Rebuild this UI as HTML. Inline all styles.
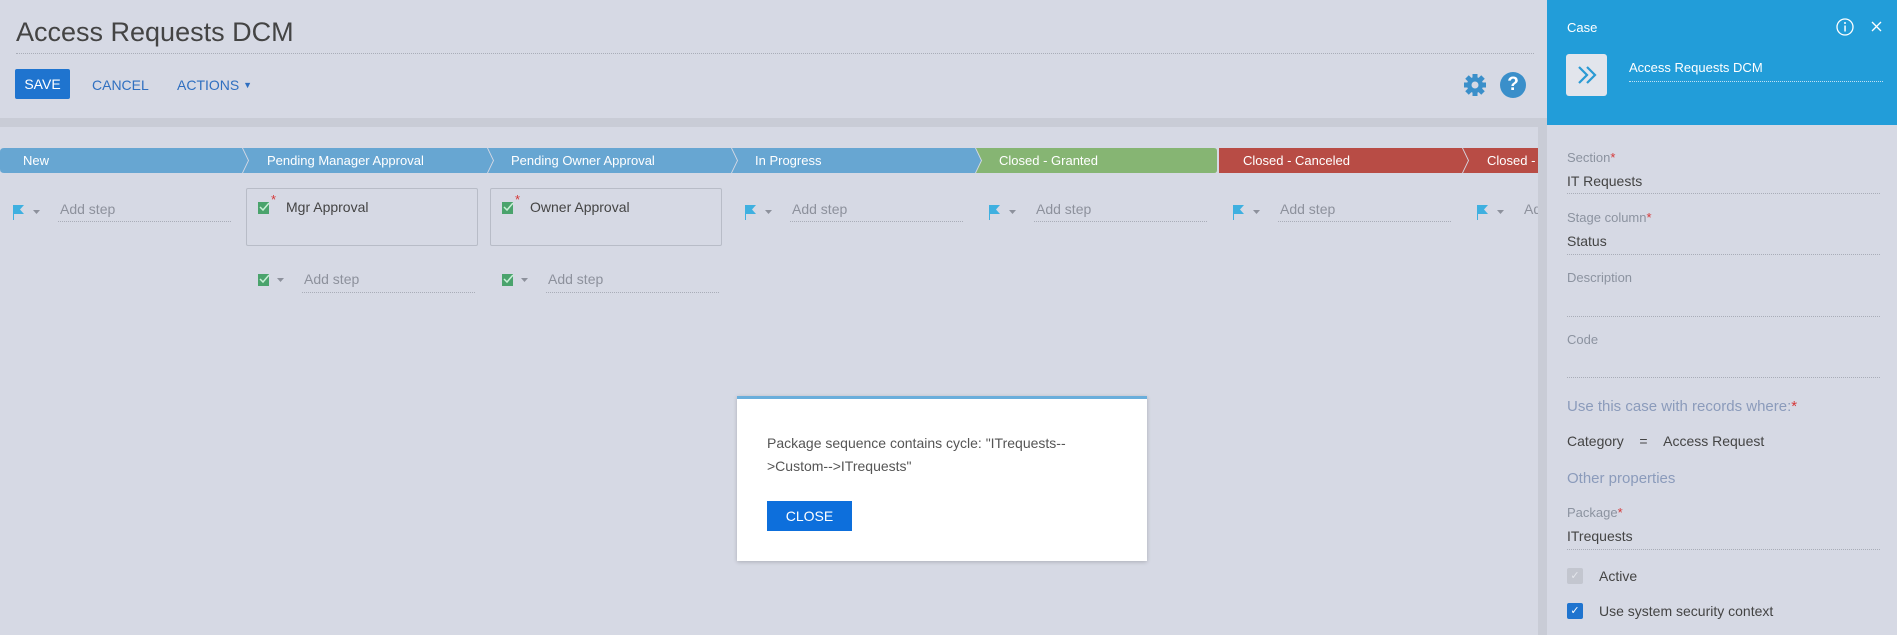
<!DOCTYPE html><html><head><style>
*{margin:0;padding:0;box-sizing:border-box}
body{width:1897px;height:635px;overflow:hidden;background:#d6d9e4;font-family:"Liberation Sans",sans-serif;position:relative;color:#444}
.a{position:absolute;white-space:nowrap}
.stage{position:absolute;top:148px;height:25px;color:#fff;font-size:13px;line-height:25px}
.dl{position:absolute;border-bottom:1px dotted #a9adb8;height:0}
.add{color:#8d919c;font-size:14px}
.lbl{font-size:13px;color:#8c93a0}
.val{font-size:14px;color:#444}
.star{color:#d53838}
</style></head><body>
<div class="a" style="left:16px;top:17px;font-size:27px;color:#444">Access Requests DCM</div>
<div class="dl" style="left:16px;top:53px;width:1518px"></div>
<div class="a" style="left:15px;top:69px;width:55px;height:30px;background:#1f74cf;border-radius:2px;color:#fff;font-size:14px;line-height:30px;text-align:center">SAVE</div>
<div class="a" style="left:92px;top:77px;font-size:14px;color:#2f6fc0">CANCEL</div>
<div class="a" style="left:177px;top:77px;font-size:14px;color:#2f6fc0">ACTIONS <span style="font-size:9px;vertical-align:2px">▼</span></div>
<svg class="a" style="left:1461px;top:71px" width="28" height="28" viewBox="0 0 28 28"><g fill="#3a8fca"><circle cx="14" cy="14" r="8"/><g stroke="#3a8fca" stroke-width="5"><line x1="14" y1="3" x2="14" y2="25"/><line x1="3" y1="14" x2="25" y2="14"/><line x1="6" y1="6" x2="22" y2="22"/><line x1="22" y1="6" x2="6" y2="22"/></g><circle cx="14" cy="14" r="3.5" fill="#d6d9e4"/></g></svg>
<div class="a" style="left:1500px;top:72px;width:26px;height:26px;border-radius:50%;background:#3a8fca;color:#fff;font-weight:bold;font-size:19px;text-align:center;line-height:26px">?</div>
<div class="a" style="left:0;top:118px;width:1547px;height:9px;background:#c9ccd6"></div>
<div class="a" style="left:1538px;top:127px;width:9px;height:508px;background:#c9ccd6"></div>
<svg class="a" style="left:0;top:148px" width="1538" height="25">
<path d="M4 0H242L248 12.5L242 25H4Q0 25 0 21V4Q0 0 4 0Z" fill="#67a6d2"/>
<path d="M243 0H487L493 12.5L487 25H243L249 12.5Z" fill="#67a6d2"/>
<path d="M488 0H731L737 12.5L731 25H488L494 12.5Z" fill="#67a6d2"/>
<path d="M732 0H975L981 12.5L975 25H732L738 12.5Z" fill="#67a6d2"/>
<path d="M976 0H1214Q1217 0 1217 3V22Q1217 25 1214 25H976L982 12.5Z" fill="#86b573"/>
<path d="M1219 0H1462L1468 12.5L1462 25H1219Z" fill="#b84c45"/>
<path d="M1463 0H1538V25H1463L1469 12.5Z" fill="#b84c45"/>
</svg>
<div class="stage" style="left:23px">New</div>
<div class="stage" style="left:267px">Pending Manager Approval</div>
<div class="stage" style="left:511px">Pending Owner Approval</div>
<div class="stage" style="left:755px">In Progress</div>
<div class="stage" style="left:999px">Closed - Granted</div>
<div class="stage" style="left:1243px">Closed - Canceled</div>
<div class="stage" style="left:1487px;width:51px;overflow:hidden">Closed - D</div>
<svg class="a" style="left:0;top:200px" width="1538" height="30">
<g fill="#3fb0e0">
<path d="M13 5h11l-4 4.5 4 4.5H14v6h-1z"/>
<path d="M745 5h11l-4 4.5 4 4.5H746v6h-1z"/>
<path d="M989 5h11l-4 4.5 4 4.5H990v6h-1z"/>
<path d="M1233 5h11l-4 4.5 4 4.5H1234v6h-1z"/>
<path d="M1477 5h11l-4 4.5 4 4.5H1478v6h-1z"/>
</g>
<g fill="#8d919c"><path d="M33 10h7l-3.5 4z"/><path d="M765 10h7l-3.5 4z"/><path d="M1009 10h7l-3.5 4z"/><path d="M1253 10h7l-3.5 4z"/><path d="M1497 10h7l-3.5 4z"/></g>
</svg>
<div class="a add" style="left:60px;top:201px">Add step</div><div class="dl" style="left:58px;top:221px;width:173px"></div>
<div class="a add" style="left:792px;top:201px">Add step</div><div class="dl" style="left:790px;top:221px;width:173px"></div>
<div class="a add" style="left:1036px;top:201px">Add step</div><div class="dl" style="left:1034px;top:221px;width:173px"></div>
<div class="a add" style="left:1280px;top:201px">Add step</div><div class="dl" style="left:1278px;top:221px;width:173px"></div>
<div class="a add" style="left:1524px;top:201px;width:14px;overflow:hidden">Add</div>
<div class="a" style="left:246px;top:188px;width:232px;height:58px;border:1px solid #b8bcc7;border-radius:2px"></div>
<div class="a" style="left:490px;top:188px;width:232px;height:58px;border:1px solid #b8bcc7;border-radius:2px"></div>
<svg class="a" style="left:255px;top:195px" width="20" height="22"><rect x="3" y="7" width="11" height="12" fill="#4aa36c"/><path d="M5 12l3 3 6-7" stroke="#c8f0d6" stroke-width="1.5" fill="none"/></svg>
<svg class="a" style="left:499px;top:195px" width="20" height="22"><rect x="3" y="7" width="11" height="12" fill="#4aa36c"/><path d="M5 12l3 3 6-7" stroke="#c8f0d6" stroke-width="1.5" fill="none"/></svg>
<div class="a star" style="left:271px;top:192px;font-size:13px">*</div>
<div class="a star" style="left:515px;top:192px;font-size:13px">*</div>
<div class="a" style="left:286px;top:199px;font-size:14px;color:#444">Mgr Approval</div>
<div class="a" style="left:530px;top:199px;font-size:14px;color:#444">Owner Approval</div>
<svg class="a" style="left:255px;top:268px" width="40" height="22"><rect x="3" y="6" width="11" height="12" fill="#4aa36c"/><path d="M5 11l3 3 6-7" stroke="#c8f0d6" stroke-width="1.5" fill="none"/><path d="M22 10h7l-3.5 4z" fill="#8d919c"/></svg>
<svg class="a" style="left:499px;top:268px" width="40" height="22"><rect x="3" y="6" width="11" height="12" fill="#4aa36c"/><path d="M5 11l3 3 6-7" stroke="#c8f0d6" stroke-width="1.5" fill="none"/><path d="M22 10h7l-3.5 4z" fill="#8d919c"/></svg>
<div class="a add" style="left:304px;top:271px">Add step</div><div class="dl" style="left:302px;top:292px;width:173px"></div>
<div class="a add" style="left:548px;top:271px">Add step</div><div class="dl" style="left:546px;top:292px;width:173px"></div>
<div class="a" style="left:737px;top:396px;width:410px;height:165px;background:#fff;border-top:3px solid #6aaedb;box-shadow:0 1px 4px rgba(0,0,0,.2)"></div>
<div class="a" style="left:767px;top:432px;font-size:14px;color:#555;line-height:23px">Package sequence contains cycle: "ITrequests--<br>&gt;Custom--&gt;ITrequests"</div>
<div class="a" style="left:767px;top:501px;width:85px;height:30px;background:#0d6fdc;color:#fff;font-size:14px;line-height:30px;text-align:center">CLOSE</div>
<!-- right panel -->
<div class="a" style="left:1547px;top:0;width:350px;height:635px;background:#d6d9e4"></div>
<div class="a" style="left:1547px;top:0;width:350px;height:125px;background:#229dd9"></div>
<div class="a" style="left:1567px;top:20px;font-size:13px;color:#fff">Case</div>
<div class="a" style="left:1566px;top:54px;width:41px;height:42px;background:#e2e5ec;border-radius:3px"></div>
<svg class="a" style="left:1566px;top:54px" width="41" height="42"><path d="M13 13l8 8-8 8M21 13l8 8-8 8" stroke="#2a9ad4" stroke-width="2.2" fill="none"/></svg>
<div class="a" style="left:1629px;top:60px;font-size:13px;color:#fff">Access Requests DCM</div>
<div class="dl" style="left:1629px;top:81px;width:254px;border-color:#bfe2f5"></div>
<svg class="a" style="left:1835px;top:17px" width="50" height="20"><circle cx="10" cy="10" r="8" stroke="#fff" stroke-width="1.3" fill="none"/><rect x="9.3" y="8.5" width="1.5" height="6" fill="#fff"/><circle cx="10" cy="6" r="1" fill="#fff"/><path d="M37 5l9 9M46 5l-9 9" stroke="#fff" stroke-width="1.3"/></svg>
<div class="a lbl" style="left:1567px;top:150px">Section<span class="star">*</span></div>
<div class="a val" style="left:1567px;top:173px">IT Requests</div>
<div class="dl" style="left:1567px;top:193px;width:313px"></div>
<div class="a lbl" style="left:1567px;top:210px">Stage column<span class="star">*</span></div>
<div class="a val" style="left:1567px;top:233px">Status</div>
<div class="dl" style="left:1567px;top:254px;width:313px"></div>
<div class="a lbl" style="left:1567px;top:270px">Description</div>
<div class="dl" style="left:1567px;top:316px;width:313px"></div>
<div class="a lbl" style="left:1567px;top:332px">Code</div>
<div class="dl" style="left:1567px;top:377px;width:313px"></div>
<div class="a" style="left:1567px;top:398px;font-size:15px;color:#8b9bbb">Use this case with records where:<span class="star">*</span></div>
<div class="a val" style="left:1567px;top:433px">Category &nbsp;&nbsp;&nbsp;= &nbsp;&nbsp;&nbsp;Access Request</div>
<div class="a" style="left:1567px;top:470px;font-size:15px;color:#8b9bbb">Other properties</div>
<div class="a lbl" style="left:1567px;top:505px">Package<span class="star">*</span></div>
<div class="a val" style="left:1567px;top:528px">ITrequests</div>
<div class="dl" style="left:1567px;top:549px;width:313px"></div>
<div class="a" style="left:1567px;top:568px;width:16px;height:16px;background:#c3c6cf;border-radius:2px;color:#e4e6ec;font-size:11px;text-align:center;line-height:16px">✓</div>
<div class="a val" style="left:1599px;top:568px">Active</div>
<div class="a" style="left:1567px;top:603px;width:16px;height:16px;background:#1f74cf;border-radius:2px;color:#fff;font-size:11px;text-align:center;line-height:16px">✓</div>
<div class="a val" style="left:1599px;top:603px">Use system security context</div>
</body></html>
